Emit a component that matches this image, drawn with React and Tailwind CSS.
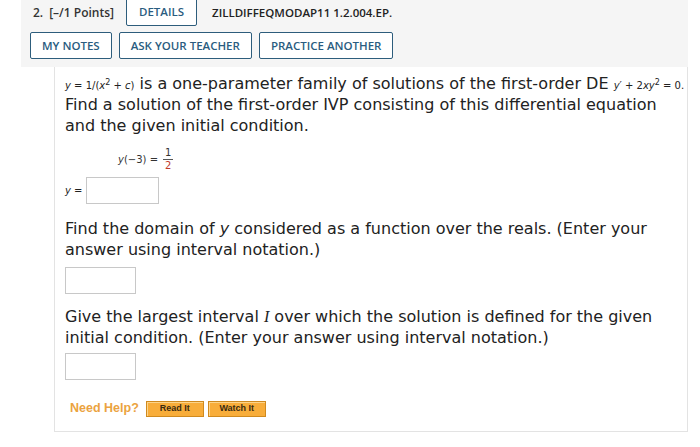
import React from "react";

const sans = { fontFamily: '"Open Sans", "Liberation Sans", sans-serif' };
const verd = { fontFamily: '"DejaVu Sans", Verdana, sans-serif' };

function Box({ className = "" }) {
  return <div className={`h-[27px] w-[71px] border border-[#c8c8c8] bg-white ${className}`} />;
}

function HeaderButton({ children }) {
  return (
    <button className="h-[27px] rounded-[2px] border border-[#2d5d7c] bg-white px-[11px] text-[11.5px] font-semibold text-[#2a5c80]">
      {children}
    </button>
  );
}

function HelpButton({ children }) {
  return (
    <span className="flex h-[16px] w-[58px] items-center justify-center border border-[#d08a1e] bg-[#f8ad3a] text-[9px] font-bold text-[#3a2a10] shadow-[inset_1px_1px_0_#fcd48a]">
      {children}
    </span>
  );
}

export default function App() {
  return (
    <div className="relative h-[447px] w-[700px] overflow-hidden bg-white text-[#222]">
      {/* Question header */}
      <div className="ml-[21px] h-[67px] w-[667px] bg-[#f5f5f5]" style={sans}>
        <div className="flex h-[26px] items-center text-[12px] font-semibold text-[#333]">
          <span className="ml-[12px]">2.</span>
          <span className="ml-[6px]">[–/1 Points]</span>
          <div className="ml-[12px] -mt-[4px] flex h-[30px] items-end rounded-b-[2px] border border-[#2d5d7c] bg-white px-[12px] pb-[5px] text-[11.5px] text-[#2a5c80]">
            DETAILS
          </div>
          <span className="ml-[15px] text-[11.5px] text-[#222]">ZILLDIFFEQMODAP11 1.2.004.EP.</span>
        </div>
        <div className="mt-[6px] flex gap-[7px] pl-[9px]">
          <HeaderButton>MY NOTES</HeaderButton>
          <HeaderButton>ASK YOUR TEACHER</HeaderButton>
          <HeaderButton>PRACTICE ANOTHER</HeaderButton>
        </div>
      </div>

      {/* Question body */}
      <div
        className="ml-[54px] h-[365px] w-[634px] border border-t-0 border-[#e3e3e3] pl-[10px] pt-[6px] text-[16px] leading-[21px]"
        style={verd}
      >
        <p className="w-[622px]">
          <span className="text-[10px] leading-none">
            <i>y</i> = 1/(<i>x</i>
            <sup className="text-[8px]">2</sup> + <i>c</i>)
          </span>{" "}
          is a one-parameter family of solutions of the first-order DE{" "}
          <span className="text-[10px] leading-none">
            <i>y</i>&#8242; + 2<i>xy</i>
            <sup className="text-[8px]">2</sup> = 0.
          </span>{" "}
          Find a solution of the first-order IVP consisting of this differential equation and the given
          initial condition.
        </p>

        <div className="ml-[53px] mt-[12px] flex items-center gap-[5px] text-[10px] text-[#333]">
          <span>
            <i>y</i>(−3) =
          </span>
          <span className="flex flex-col items-center leading-[10px]">
            <span className="border-b border-[#555] px-[2px] pb-[1px]">1</span>
            <span className="pt-[1px] text-[#c0392b]">2</span>
          </span>
        </div>

        <div className="mt-[6px] flex items-center gap-[4px] text-[10px]">
          <span>
            <i>y</i> =
          </span>
          <Box className="h-[26px] w-[73px]" />
        </div>

        <p className="mt-[14px] w-[622px]">
          Find the domain of <i>y</i> considered as a function over the reals. (Enter your answer using
          interval notation.)
        </p>
        <Box className="mt-[7px]" />

        <p className="mt-[12px] w-[622px]">
          Give the largest interval <i style={{ fontFamily: '"Liberation Serif", serif' }}>I</i> over which
          the solution is defined for the given initial condition. (Enter your answer using interval
          notation.)
        </p>
        <Box className="mt-[5px]" />

        <div
          className="ml-[5px] mt-[18px] flex items-center gap-[4px]"
          style={{ fontFamily: '"Liberation Sans", Arial, sans-serif' }}
        >
          <span className="mr-[3px] text-[12.5px] font-bold text-[#eba340]">Need Help?</span>
          <HelpButton>Read It</HelpButton>
          <HelpButton>Watch It</HelpButton>
        </div>
      </div>
    </div>
  );
}
